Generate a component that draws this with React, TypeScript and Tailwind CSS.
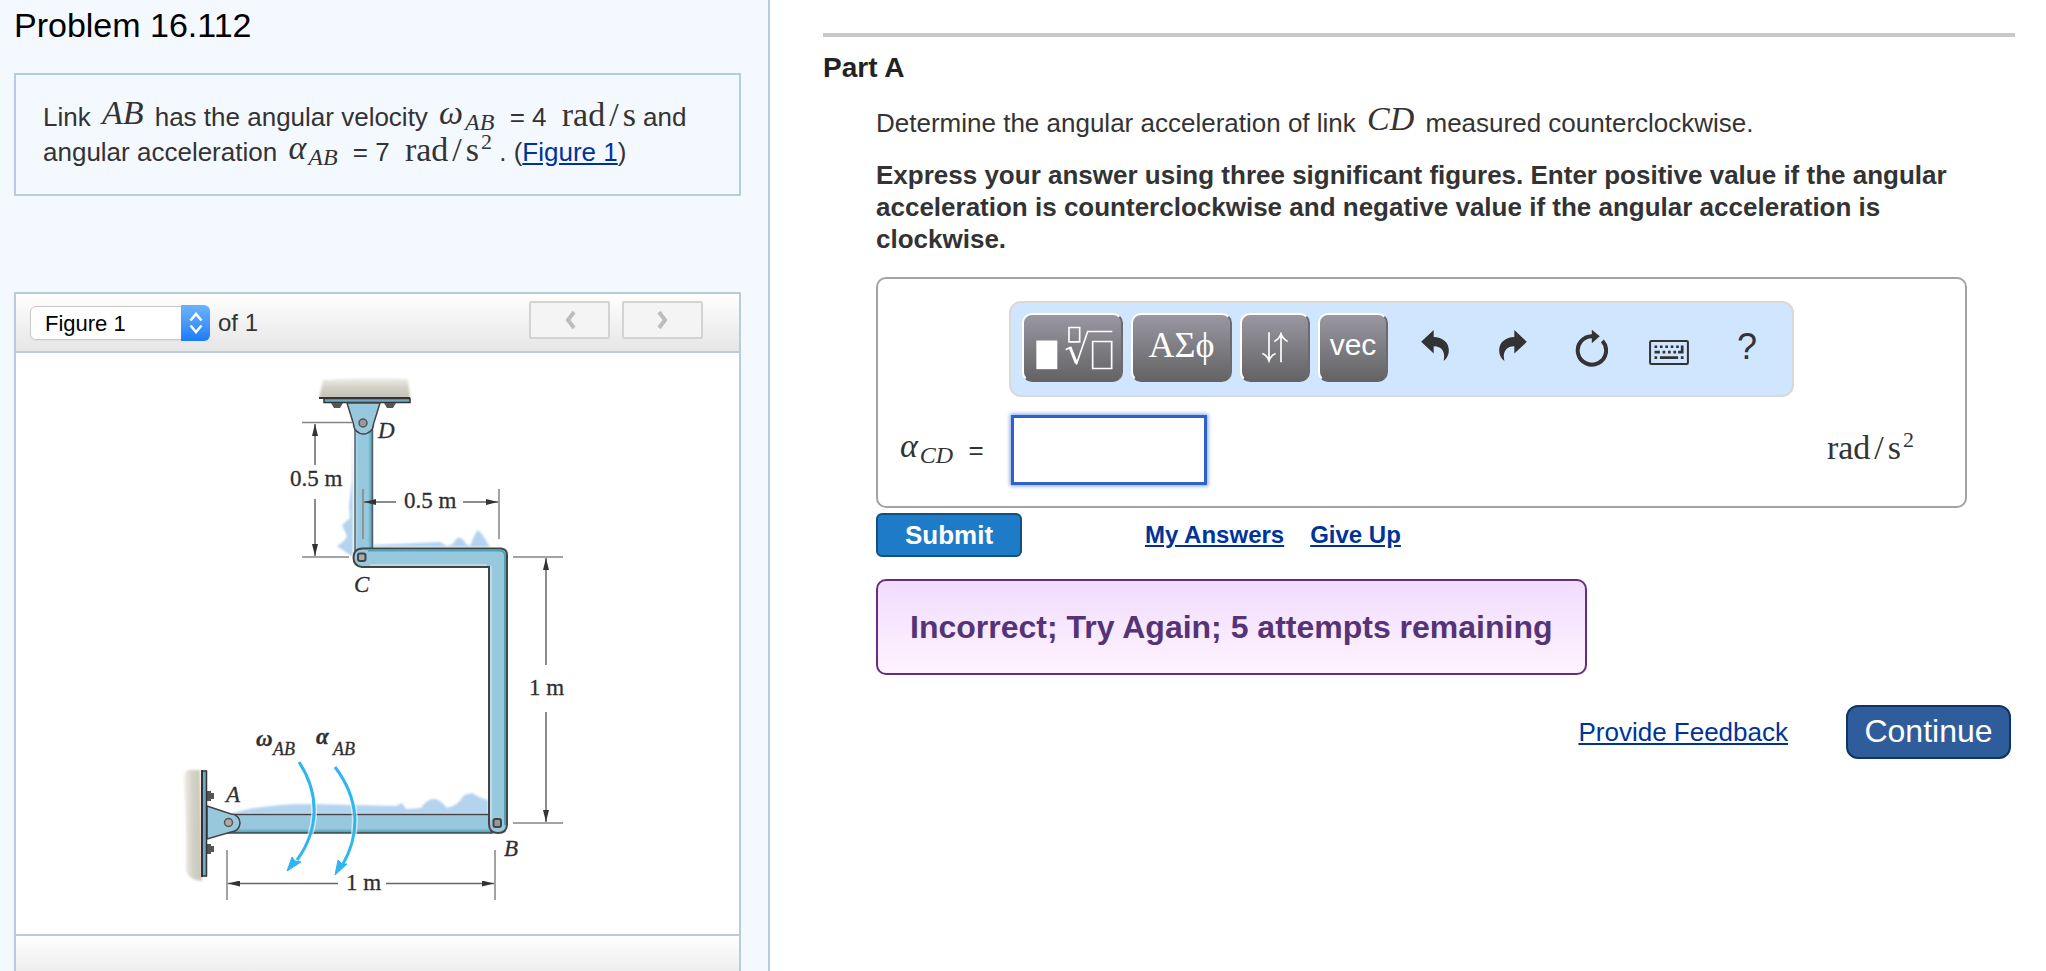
'use client'

import { ReactNode, useState } from 'react'

const sans = 'font-["Liberation_Sans",Arial,sans-serif]'
const serif = 'font-["Liberation_Serif","Times_New_Roman",serif]'

// leading-0 keeps the math from pushing the text lines apart
const Sym = ({ children }: { children: ReactNode }) => (
    <i className={`${serif} relative -top-0.5 px-1 text-[34px] leading-0`}>{children}</i>
)

const Sub = ({ children }: { children: ReactNode }) => (
    <i className={`${serif} relative top-1 mr-2 -ml-0.5 text-[24px] leading-0`}>{children}</i>
)

const Unit = ({ squared = false }: { squared?: boolean }) => (
    <span className={`${serif} whitespace-nowrap text-[34px] leading-0`}>
        rad<span className="mx-1">/</span>s
        {squared && <span className="relative -top-3 ml-0.5 text-[22px] leading-0">2</span>}
    </span>
)

const toolButton =
    'flex h-[69px] items-center justify-center rounded-[10px] border-2 border-t-white border-l-white border-r-[#6b6b6f] border-b-[#636363] bg-linear-to-b from-[#9a97a3] to-[#646464] text-white'
const iconButton = 'flex h-[69px] w-[78px] items-center justify-center text-[#333]'

const dimensions = [
    'M315 465V424',
    'M315 499V556',
    'M396 502H364',
    'M463 502H498',
    'M546 665V558',
    'M546 712V822',
    'M338 883.500H228',
    'M386 883.500H494',
]

function Diagram() {
    return (
        <svg viewBox="170 370 420 540" className="ml-[154px] h-[540px] w-[420px]" role="img" aria-label="Figure 1">
            <defs>
                <linearGradient id="ceiling" x1="0" y1="0" x2="0" y2="1">
                    <stop offset="0" stopColor="#eeede8" />
                    <stop offset="0.5" stopColor="#d3d1c6" />
                    <stop offset="1" stopColor="#c3c1b3" />
                </linearGradient>
                <linearGradient id="wall" x1="0" y1="0" x2="1" y2="0">
                    <stop offset="0" stopColor="#efeee9" />
                    <stop offset="0.5" stopColor="#d3d1c6" />
                    <stop offset="1" stopColor="#c8c6b8" />
                </linearGradient>
                <linearGradient id="rodV" x1="0" y1="0" x2="1" y2="0">
                    <stop offset="0" stopColor="#b3d9e8" />
                    <stop offset="0.2" stopColor="#98c8de" />
                    <stop offset="0.75" stopColor="#98c8de" />
                    <stop offset="1" stopColor="#3d9bb0" />
                </linearGradient>
                <linearGradient id="rodH" x1="0" y1="0" x2="0" y2="1">
                    <stop offset="0" stopColor="#a9d3e4" />
                    <stop offset="0.1" stopColor="#98c8de" />
                    <stop offset="0.75" stopColor="#98c8de" />
                    <stop offset="1" stopColor="#3d9bb0" />
                </linearGradient>
                <marker id="dim" viewBox="0 0 12 6" markerWidth="12" markerHeight="6" refX="12" refY="3" orient="auto" markerUnits="userSpaceOnUse">
                    <path d="M0 0L12 3L0 6Z" fill="#333" />
                </marker>
                <filter id="soft">
                    <feGaussianBlur stdDeviation="1" />
                </filter>
            </defs>

            {/* splashes */}
            <g fill="#b3d3ef" filter="url(#soft)">
                <path d="M353 430V557L337 546L344 541L347 536L342 525L350 518L349 506L352 480Z" />
                <path d="M373 547V545L440 542L447 546L453 544Q459 531 466 544L470 546L475 534L478 530L482 534L490 547Z" />
                <path d="M230 814Q260 804 310 804L396 806L402 803L406 809L421 808Q433 790 447 808Q458 806 464 795L472 793Q482 799 488 800V814Z" />
            </g>

            {/* ceiling support */}
            <path d="M323 380Q366 377 408 379L410 398H319Z" fill="url(#ceiling)" filter="url(#soft)" />
            <path d="M324 398.500H410V402.500H324Z" fill="#6fa9c4" stroke="#333" strokeWidth="1.500" />
            <path d="M319 398H410" stroke="#333" strokeWidth="2" />
            <path d="M331 403H343L340 408H334ZM384 403H396L393 408H387Z" fill="#555" />

            {/* link CD */}
            <rect x="355" y="423" width="17.500" height="128" fill="url(#rodV)" stroke="#4f6068" strokeWidth="1.500" />
            <path d="M347 403H380L373.500 424A10 10 0 0 1 353.500 424Z" fill="#98c8de" stroke="#444" strokeWidth="1.500" />
            <circle cx="363" cy="423" r="4" fill="#9a9a9a" stroke="#555" strokeWidth="1.500" />

            {/* link AB */}
            <rect x="222" y="814.500" width="270" height="18.500" fill="url(#rodH)" stroke="#444" strokeWidth="1.500" />

            {/* bent link BC */}
            <path
                d="M362 548.500H501Q507 549 507 555V824Q507 833 498 833Q489 833 489 824V567H362Q353.500 566 353.500 557.500Q353.500 549 362 548.500Z"
                fill="#98c8de"
                stroke="#444"
                strokeWidth="2"
            />
            <path d="M368 550.500H500Q505 551 505 556V825" fill="none" stroke="#4aa3b8" strokeWidth="2" />
            <path d="M370 565H487M491 566V820" fill="none" stroke="#c3e0ec" strokeWidth="1.500" />
            <rect x="358" y="553.500" width="7.500" height="7.500" rx="2" fill="#aaa" stroke="#444" strokeWidth="2" />
            <rect x="493.500" y="819" width="7.500" height="8" rx="2" fill="#999" stroke="#444" strokeWidth="2" />

            {/* wall support */}
            <path d="M200 770H188Q184 772 184 778Q187 830 186 870Q188 880 202 881Z" fill="url(#wall)" filter="url(#soft)" />
            <path d="M207 791H211V793H214V799H211V801H207ZM207 844H211V846H214V852H211V854H207Z" fill="#555" />
            <path d="M207 806L231 814A9 9 0 0 1 231 832L207 839Z" fill="#98c8de" stroke="#444" strokeWidth="1.500" />
            <rect x="202" y="771" width="4.500" height="105" fill="#6fa9c4" stroke="#333" strokeWidth="1.500" />
            <path d="M202 770V877" stroke="#333" strokeWidth="2" />
            <circle cx="228.500" cy="822.500" r="4" fill="#aaa" stroke="#555" strokeWidth="1.500" />

            {/* dimension lines */}
            <path
                d="M302 422.500H352M302 557H349M363 489V539M499 489V539M513 557H563M513 823H563M227 850V900M495 850V900"
                fill="none"
                stroke="#858585"
                strokeWidth="1.500"
            />
            {dimensions.map((d) => (
                <path key={d} d={d} stroke="#666" strokeWidth="1.500" markerEnd="url(#dim)" />
            ))}

            {/* rotation arrows */}
            <g fill="none">
                <path d="M299 762C320 794 319 830 297 860M335 767C360 800 360 834 343 864" stroke="#fff" strokeOpacity="0.600" strokeWidth="6" />
                <path d="M299 762C320 794 319 830 297 860M335 767C360 800 360 834 343 864" stroke="#2fb6f0" strokeWidth="3" />
                <path d="M287 871L292 857L295 861L301 862ZM335 875L338 860L342 864L347 864Z" fill="#2fb6f0" stroke="#2fb6f0" />
            </g>

            <g className={serif} fill="#2f2f2f" stroke="#2f2f2f" strokeWidth="0.300" fontSize="23">
                <text x="290" y="486">0.5 m</text>
                <text x="404" y="508">0.5 m</text>
                <text x="529" y="695">1 m</text>
                <text x="346" y="890">1 m</text>
                <g fontStyle="italic">
                    <text x="378" y="438">D</text>
                    <text x="354" y="592">C</text>
                    <text x="226" y="802">A</text>
                    <text x="504" y="856">B</text>
                    <text x="256" y="746" fontWeight="bold">ω</text>
                    <text x="316" y="744" fontWeight="bold">α</text>
                    <text x="273" y="755" fontSize="18">AB</text>
                    <text x="333" y="755" fontSize="18">AB</text>
                </g>
            </g>
        </svg>
    )
}

function TemplateIcon() {
    return (
        <svg viewBox="529 165 231 131" className="ml-1 h-[44px] w-[77px]" fill="none" stroke="currentColor" strokeWidth="5">
            <path d="M530 208H593V294H530Z" fill="currentColor" stroke="none" />
            <path d="M628 169H660V212H628ZM699 211H756V292H699Z" />
            <path d="M618 236L633 228" />
            <path d="M631 228L650 276" strokeWidth="9" />
            <path d="M650 280L684 181H758" />
        </svg>
    )
}

function KeyboardIcon() {
    return (
        <svg viewBox="0 0 118 74" className="mt-2.5 h-[25px] w-10" fill="none" stroke="currentColor">
            <rect x="3" y="3" width="112" height="68" rx="4" strokeWidth="6" />
            <path d="M16 20H88" strokeWidth="8" strokeDasharray="8 8" />
            <path d="M16 36H32M40 36H48M56 36H64M72 36H80" strokeWidth="8" />
            <path d="M98 16V36H86" strokeWidth="8" />
            <path d="M16 52H24M32 52H86M94 52H102" strokeWidth="8" />
        </svg>
    )
}

function Toolbar() {
    return (
        <div className="ml-[131px] flex w-fit rounded-xl border-2 border-[#d9d9d9] bg-[#d0e6ff] pt-2.5 pr-1.5 pb-[13px] pl-[11px]">
            <div className="flex gap-2">
                <button aria-label="Templates" className={`${toolButton} w-[101px]`}>
                    <TemplateIcon />
                </button>
                <button className={`${toolButton} ${serif} w-[101px] pb-1.5 text-[36px]`}>ΑΣϕ</button>
                <button aria-label="Arrows" className={`${toolButton} w-[70px]`}>
                    <svg viewBox="0 0 78 92" className="h-[31px] w-[26px]" fill="none" stroke="currentColor" strokeWidth="5">
                        <path d="M21 0V86M1 64Q16 70 21 86Q26 70 41 64M57 90V5M37 28Q52 20 57 5Q62 20 77 28" />
                    </svg>
                </button>
                <button className={`${toolButton} w-[70px] pb-1.5 text-[30px]`}>vec</button>
            </div>
            <div className="ml-2 flex">
                <button aria-label="Undo" className={iconButton}>
                    <svg viewBox="0 0 84 94" className="mb-1 h-[31px] w-7" fill="currentColor">
                        <path d="M0 36L38 0V21C64 22 84 36 84 62C84 76 78 86 68 94C74 70 66 49 38 49V71Z" />
                    </svg>
                </button>
                <button aria-label="Redo" className={iconButton}>
                    <svg viewBox="0 0 84 94" className="mb-1 h-[31px] w-7" fill="currentColor">
                        <path d="M84 36L46 0V21C20 22 0 36 0 62C0 76 6 86 16 94C10 70 18 49 46 49V71Z" />
                    </svg>
                </button>
                <button aria-label="Reset" className={iconButton}>
                    <svg viewBox="705 176 100 113" className="h-[38px] w-[33px]" fill="none" stroke="currentColor" strokeWidth="12">
                        <path d="M788 211A43 43 0 1 1 757 197" />
                        <path d="M756 177L780 197L756 218Z" fill="currentColor" stroke="none" />
                    </svg>
                </button>
                <button aria-label="Keyboard shortcuts" className={iconButton}>
                    <KeyboardIcon />
                </button>
                <button className={`${iconButton} pb-0.5 text-[36px]`}>?</button>
            </div>
        </div>
    )
}

export default function App() {
    const [answer, setAnswer] = useState('')

    return (
        <div className={`${sans} flex min-h-screen bg-white text-[26px] text-[#333]`}>
            <aside className="flex w-[770px] shrink-0 flex-col border-r-2 border-[#b9cbdf] bg-[#f4f9ff] pr-[27px] pl-3.5">
                <h1 className="mt-1 text-[34px] leading-[42px] text-black">Problem 16.112</h1>

                <section className="mt-[27px] border-2 border-[#b9cbdf] px-[27px] pt-[25px] pb-6 leading-[35px]">
                    Link <Sym>AB</Sym>
                    {' '}has the angular velocity <Sym>ω</Sym><Sub>AB</Sub>
                    {' '}= 4 <span className="ml-2" /><Unit /> and
                    <br />
                    angular acceleration <Sym>α</Sym><Sub>AB</Sub>
                    {' '}= 7 <span className="ml-2" /><Unit squared /> . (
                    <a href="#figure" className="text-[#039] underline">Figure 1</a>)
                </section>

                <section id="figure" className="mt-24 flex flex-1 flex-col border-2 border-b-0 border-[#b9cbdf] bg-white">
                    <header className="flex h-[59px] items-center border-b-2 border-[#b9cbdf] bg-linear-to-b from-white to-[#e6e6e6] pr-9 pl-3.5 text-[24px]">
                        <div className="relative">
                            <select
                                aria-label="Figure"
                                className="h-[34px] w-[180px] appearance-none rounded-md border border-[#c9c9c9] bg-white pl-3.5 text-[22px] text-black shadow-xs"
                            >
                                <option>Figure 1</option>
                            </select>
                            <span className="pointer-events-none absolute inset-y-0 right-0 flex w-[29px] items-center justify-center rounded-r-md bg-linear-to-b from-[#6cb3fa] to-[#1a7cf9]">
                                <svg viewBox="0 0 14 22" className="h-[22px] w-3.5" fill="none" stroke="#fff" strokeWidth="2.500">
                                    <path d="M1.500 8.500L7 2L12.500 8.500M1.500 13.500L7 20L12.500 13.500" />
                                </svg>
                            </span>
                        </div>
                        <span className="ml-2">of 1</span>
                        <div className="mb-1.5 ml-auto flex gap-3">
                            <button aria-label="Previous figure" className="flex h-[38px] w-[81px] items-center justify-center rounded-xs border-2 border-[#d3d3d3] bg-[#f4f4f4]">
                                <svg viewBox="0 0 12 18" className="h-[18px] w-3" fill="none" stroke="#bdbdbd" strokeWidth="4">
                                    <path d="M10 1L4 9L10 17" />
                                </svg>
                            </button>
                            <button aria-label="Next figure" className="flex h-[38px] w-[81px] items-center justify-center rounded-xs border-2 border-[#d3d3d3] bg-[#f4f4f4]">
                                <svg viewBox="0 0 12 18" className="h-[18px] w-3" fill="none" stroke="#bdbdbd" strokeWidth="4">
                                    <path d="M2 1L8 9L2 17" />
                                </svg>
                            </button>
                        </div>
                    </header>
                    <div className="pt-[17px] pb-6">
                        <Diagram />
                    </div>
                    <footer className="min-h-9 flex-1 border-t-2 border-[#b9cbdf] bg-linear-to-b from-white to-[#eee]" />
                </section>
            </aside>

            <main className="min-w-0 flex-1 pt-[33px] pr-[31px] pl-[53px]">
                <hr className="border-t-4 border-[#c9c9c9]" />
                <h2 className="mt-[13px] text-[28px] leading-9 font-bold text-[#222]">Part A</h2>

                <div className="pl-[53px]">
                    <p className="mt-[21px] leading-8">
                        Determine the angular acceleration of link <Sym>CD</Sym> measured counterclockwise.
                    </p>
                    <p className="mt-5 mr-8 leading-8 font-bold">
                        Express your answer using three significant figures. Enter positive value if the angular
                        acceleration is counterclockwise and negative value if the angular acceleration is clockwise.
                    </p>

                    <div className="mt-[22px] mr-12 rounded-[10px] border-2 border-[#a3a3a3] pt-[22px] pb-[21px]">
                        <Toolbar />
                        <div className="mt-[18px] flex items-center pr-[51px] pl-[18px]">
                            <label htmlFor="answer" className="w-[115px] whitespace-nowrap">
                                <Sym>α</Sym><Sub>CD</Sub> <span>=</span>
                            </label>
                            <input
                                id="answer"
                                value={answer}
                                onChange={(e) => setAnswer(e.target.value)}
                                className="h-[70px] w-[196px] border-3 border-[#2f62c9] bg-white px-2 shadow-[0_0_4px_1px_#7ea0e6] outline-none"
                            />
                            <span className="ml-auto"><Unit squared /></span>
                        </div>
                    </div>

                    <div className="mt-[5px] flex items-center text-[24px] font-bold">
                        <button className="h-11 w-[146px] rounded-md border-2 border-[#12507f] bg-[#1e7bc8] text-[26px] font-bold text-white">
                            Submit
                        </button>
                        <a href="#answers" className="ml-[123px] text-[#039] underline">My Answers</a>
                        <a href="#give-up" className="ml-[26px] text-[#039] underline">Give Up</a>
                    </div>

                    <div className="mt-[22px] flex h-24 w-fit items-center rounded-[10px] border-2 border-[#6a2c80] bg-linear-to-b from-[#f1dcfd] to-[#fff3ff] px-8 text-[32px] font-bold text-[#553377]">
                        Incorrect; Try Again; 5 attempts remaining
                    </div>
                </div>

                <div className="mt-[30px] flex items-center justify-end pr-1">
                    <a href="#feedback" className="text-[#039] underline">Provide Feedback</a>
                    <button className="ml-[58px] h-[54px] w-[165px] rounded-xl border-2 border-[#0f3564] bg-[#2f5d9b] pb-1 text-[32px] text-white">
                        Continue
                    </button>
                </div>
            </main>
        </div>
    )
}
